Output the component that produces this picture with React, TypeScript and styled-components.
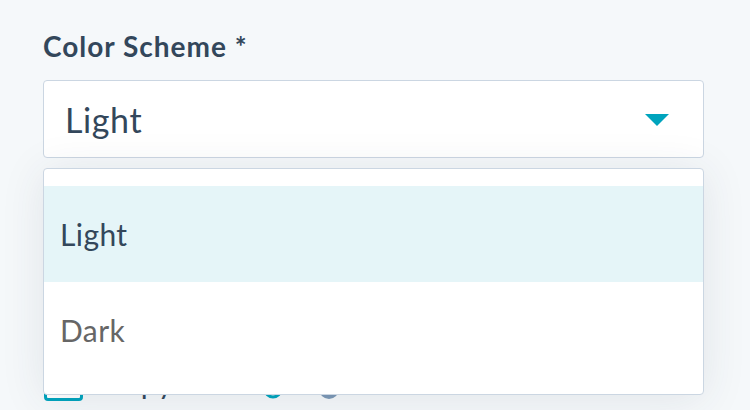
import styled, { createGlobalStyle } from "styled-components";

const options = ["Light", "Dark"];
const selected = "Light";

export default function App() {
	return (
		<>
			<GlobalStyle />
			<Page>
				<Field>
					<Label>Color Scheme *</Label>
					<SelectWrap>
						<SelectBox>
							<SelectValue>{selected}</SelectValue>
							<Caret viewBox="0 0 24 12" aria-hidden>
								<path d="M0 0 H24 L12 12 Z" fill="#00a4bd" />
							</Caret>
						</SelectBox>
						<Menu>
							{options.map((option) => (
								<MenuItem key={option} $active={option === selected}>
									{option}
								</MenuItem>
							))}
						</Menu>
					</SelectWrap>
				</Field>

				<CheckRow>
					<CheckBox />
					<CheckLabel>Copy code</CheckLabel>
					<InfoIcon viewBox="0 0 20 20" aria-hidden>
						<circle cx="10" cy="10" r="8" fill="none" stroke="#00a4bd" strokeWidth="3" />
					</InfoIcon>
					<HelpIcon viewBox="0 0 20 20" aria-hidden>
						<circle cx="10" cy="10" r="10" fill="#7c98b6" />
					</HelpIcon>
				</CheckRow>
			</Page>
		</>
	);
}

const GlobalStyle = createGlobalStyle`
	html, body {
		margin: 0;
		padding: 0;
		background: #f5f8fa;
		font-family: Lato, "Noto Sans", sans-serif;
	}
`;

const Page = styled.div`
	width: 750px;
	height: 410px;
	overflow: hidden;
	box-sizing: border-box;
	padding: 26px 46px 0 43px;
	background: #f5f8fa;
`;

const Field = styled.div`
	display: flex;
	flex-direction: column;
	gap: 14px;
`;

const Label = styled.label`
	font-size: 28px;
	font-weight: 700;
	line-height: 40px;
	color: #33475b;
	letter-spacing: 1px;
`;

const SelectWrap = styled.div`
	position: relative;
`;

const SelectBox = styled.div`
	height: 78px;
	box-sizing: border-box;
	display: flex;
	align-items: center;
	justify-content: space-between;
	padding: 0 34px 0 21px;
	background: #ffffff;
	border: 1.5px solid #cbd6e2;
	border-radius: 4px;
`;

const SelectValue = styled.span`
	font-size: 34px;
	letter-spacing: 0.6px;
	color: #33475b;
`;

const Caret = styled.svg`
	width: 24px;
	height: 12px;
	margin-top: 2px;
`;

const Menu = styled.div`
	position: absolute;
	top: 88px;
	left: 0;
	right: 0;
	box-sizing: border-box;
	padding: 17px 0 16px;
	background: #ffffff;
	border: 1.5px solid #cbd6e2;
	border-radius: 4px;
	box-shadow: 0 4px 44px rgba(45, 62, 80, 0.1);
	z-index: 2;
`;

const MenuItem = styled.div<{ $active: boolean }>`
	height: 96px;
	display: flex;
	align-items: center;
	padding-left: 16px;
	font-size: 30px;
	letter-spacing: 0.4px;
	background: ${({ $active }) => ($active ? "#e5f5f8" : "#ffffff")};
	color: ${({ $active }) => ($active ? "#33475b" : "#666666")};
`;

const CheckRow = styled.div`
	margin-top: 204px;
	display: flex;
	align-items: center;
	gap: 16px;
	padding-left: 1px;
`;

const CheckBox = styled.div`
	width: 39px;
	height: 39px;
	box-sizing: border-box;
	border: 3px solid #00a4bd;
	border-radius: 4px;
	background: #ffffff;
	margin-right: 4px;
`;

const CheckLabel = styled.span`
	font-size: 30px;
	letter-spacing: 0.5px;
	color: #33475b;
`;

const InfoIcon = styled.svg`
	width: 20px;
	height: 20px;
	margin-top: 14px;
`;

const HelpIcon = styled.svg`
	width: 20px;
	height: 20px;
	margin-top: 14px;
	margin-left: 20px;
`;
